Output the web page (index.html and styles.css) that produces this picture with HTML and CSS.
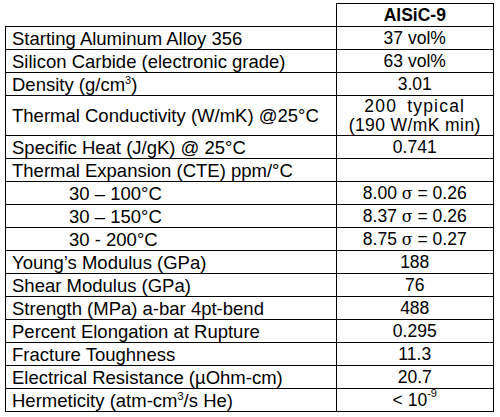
FILE: index.html
```html
<!DOCTYPE html>
<html>
<head>
<meta charset="utf-8">
<link rel="stylesheet" href="styles.css">
</head>
<body>
<table class="spec">
  <tr class="head">
    <td class="label blank"></td>
    <td class="value title">AlSiC-9</td>
  </tr>
  <tr><td class="label">Starting Aluminum Alloy 356</td><td class="value">37 vol%</td></tr>
  <tr><td class="label">Silicon Carbide (electronic grade)</td><td class="value">63 vol%</td></tr>
  <tr><td class="label">Density (g/cm<sup>3</sup>)</td><td class="value">3.01</td></tr>
  <tr class="tall"><td class="label">Thermal Conductivity (W/mK) @25°C</td><td class="value wide"><span class="typ">200 typical</span><br>(190 W/mK min)</td></tr>
  <tr><td class="label">Specific Heat (J/gK) @ 25°C</td><td class="value">0.741</td></tr>
  <tr><td class="label">Thermal Expansion (CTE) ppm/°C</td><td class="value"></td></tr>
  <tr><td class="label sub">30 – 100°C</td><td class="value">8.00 <span class="sym">σ</span> = 0.26</td></tr>
  <tr><td class="label sub">30 – 150°C</td><td class="value">8.37 <span class="sym">σ</span> = 0.26</td></tr>
  <tr><td class="label sub">30 - 200°C</td><td class="value">8.75 <span class="sym">σ</span> = 0.27</td></tr>
  <tr><td class="label">Young’s Modulus (GPa)</td><td class="value">188</td></tr>
  <tr><td class="label">Shear Modulus (GPa)</td><td class="value">76</td></tr>
  <tr><td class="label">Strength (MPa) a-bar 4pt-bend</td><td class="value">488</td></tr>
  <tr><td class="label">Percent Elongation at Rupture</td><td class="value">0.295</td></tr>
  <tr><td class="label">Fracture Toughness</td><td class="value">11.3</td></tr>
  <tr><td class="label">Electrical Resistance (µOhm-cm)</td><td class="value">20.7</td></tr>
  <tr><td class="label">Hermeticity (atm-cm<sup>3</sup>/s He)</td><td class="value">&lt; 10<sup class="hi">-9</sup></td></tr>
</table>
</body>
</html>
```
FILE: styles.css
```css
html, body {
  margin: 0;
  padding: 0;
  background: #ffffff;
}
body {
  font-family: "Liberation Sans", Arial, sans-serif;
  color: #000000;
}
.spec {
  border-collapse: collapse;
  margin: 3px 0 0 5px;
  width: 489px;
  table-layout: fixed;
}
.spec td {
  border: 1px solid #000000;
  padding: 0 6px;
  height: 22px;
  vertical-align: middle;
  white-space: nowrap;
  line-height: 19px;
}
.spec tr.tall td {
  height: 39px;
}
.label {
  width: 318px;
  font-size: 18.5px;
  text-align: left;
}
.label.sub {
  padding-left: 63px;
}
.label.blank {
  border: none;
  border-bottom: 1px solid #000000;
}
.value {
  font-size: 17.5px;
  text-align: center;
}
.value.title {
  font-weight: bold;
}
.value.wide {
  padding: 0;
  letter-spacing: 0.4px;
}
.typ {
  letter-spacing: 1.2px;
  word-spacing: 4px;
}
.sym {
  font-family: "DejaVu Serif", serif;
  font-size: 16px;
}
sup {
  font-size: 11px;
  line-height: 0;
  vertical-align: 7px;
}
sup.hi {
  vertical-align: 9px;
}
```
